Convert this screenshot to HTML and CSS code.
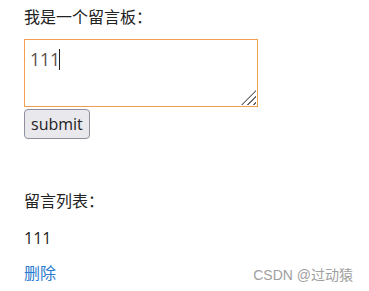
FILE: index.html
```html
<!DOCTYPE html>
<html>
<head lang="en">
    <meta charset="UTF-8">
    <title>留言板</title>
    <link rel="stylesheet" href="styles.css">
</head>
<body>
<div class="board">
    <p class="board-title">我是一个留言板：</p>
    <div class="input-wrap">
        <textarea class="board-input">111</textarea>
        <span class="caret"></span>
        <span class="grip"></span>
    </div>
    <button class="board-submit">submit</button>
    <p class="list-title">留言列表：</p>
    <div class="msg">
        <p class="msg-text">111</p>
        <a class="msg-del" href="javascript:void(0);">删除</a>
    </div>
</div>
<div class="mark">CSDN @过动猿</div>
</body>
</html>
```
FILE: styles.css
```css
body {
    margin: 0;
    font-family: "Open Sans", "Noto Sans CJK SC", sans-serif;
    font-size: 16px;
    color: #222;
    background: #fff;
}
p {
    margin: 0;
}
.board {
    padding: 6px 24px 0 24px;
}
.board-title {
    line-height: 22px;
}
.input-wrap {
    position: relative;
    width: 234px;
    margin-top: 11px;
}
.board-input {
    display: block;
    width: 234px;
    height: 68px;
    box-sizing: border-box;
    border: 1px solid #f0a050;
    padding: 7px 5px;
    font-family: "Open Sans", sans-serif;
    font-size: 17.5px;
    color: #5a5048;
    outline: none;
    resize: none;
}
.caret {
    position: absolute;
    left: 35px;
    top: 10px;
    width: 1px;
    height: 21px;
    background: #222;
}
.grip {
    position: absolute;
    right: 2px;
    bottom: 2px;
    width: 15px;
    height: 15px;
    background: repeating-linear-gradient(135deg, transparent 0 2.5px, #6a6a6a 2.5px 4px);
    clip-path: polygon(100% 0, 100% 100%, 0 100%);
}
.board-submit {
    display: block;
    margin-top: 2px;
    height: 30px;
    padding: 0 6px;
    font-family: "Open Sans", sans-serif;
    font-size: 16px;
    color: #222;
    background: #e9e9ed;
    border: 1px solid #8f8f9d;
    border-radius: 4px;
}
.list-title {
    margin-top: 51px;
    line-height: 22px;
}
.msg-text {
    margin-top: 15px;
    line-height: 22px;
}
.msg-del {
    display: inline-block;
    margin-top: 13px;
    line-height: 22px;
    color: #2a7ad0;
    text-decoration: none;
}
.mark {
    position: absolute;
    right: 16px;
    bottom: 7px;
    font-family: "Liberation Sans", "Noto Sans CJK SC", sans-serif;
    font-size: 14px;
    color: #a0a0a0;
}
```
